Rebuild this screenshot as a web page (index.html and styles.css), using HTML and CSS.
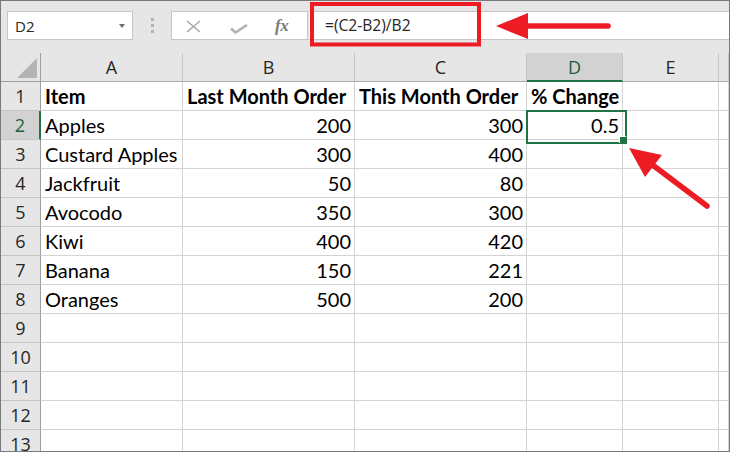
FILE: index.html
```html
<!DOCTYPE html>
<html>
<head>
<meta charset="utf-8">
<link rel="stylesheet" href="styles.css">
</head>
<body>
<div class="app">
  <div class="toolbar">
    <div class="namebox">
      <span class="name">D2</span>
      <span class="caret"></span>
    </div>
    <div class="grip"><i></i><i></i><i></i></div>
    <div class="fxbox">
      <svg class="ic ic-x" width="15" height="13" viewBox="0 0 15 13"><path d="M1 1 L14 12 M14 1 L1 12" stroke="#a9a9a9" stroke-width="1.6" fill="none"/></svg>
      <svg class="ic ic-check" width="18" height="10" viewBox="0 0 18 10"><path d="M1 4.5 L5.5 8.5 L17 1" stroke="#b3b3b3" stroke-width="2.6" fill="none"/></svg>
      <span class="fx">fx</span>
    </div>
    <div class="formula">=(C2-B2)/B2</div>
  </div>

  <div class="sheet">
    <div class="corner"><span class="tri"></span></div>
    <div class="ch">A</div>
    <div class="ch">B</div>
    <div class="ch">C</div>
    <div class="ch sel">D</div>
    <div class="ch">E</div>
    <div class="ch"></div>

    <div class="rh">1</div>
    <div class="c b">Item</div>
    <div class="c b">Last Month Order</div>
    <div class="c b">This Month Order</div>
    <div class="c b">% Change</div>
    <div class="c"></div>
    <div class="c"></div>

    <div class="rh sel">2</div>
    <div class="c">Apples</div>
    <div class="c n">200</div>
    <div class="c n">300</div>
    <div class="c n active">0.5</div>
    <div class="c"></div>
    <div class="c"></div>

    <div class="rh">3</div>
    <div class="c">Custard Apples</div>
    <div class="c n">300</div>
    <div class="c n">400</div>
    <div class="c"></div>
    <div class="c"></div>
    <div class="c"></div>

    <div class="rh">4</div>
    <div class="c">Jackfruit</div>
    <div class="c n">50</div>
    <div class="c n">80</div>
    <div class="c"></div>
    <div class="c"></div>
    <div class="c"></div>

    <div class="rh">5</div>
    <div class="c">Avocodo</div>
    <div class="c n">350</div>
    <div class="c n">300</div>
    <div class="c"></div>
    <div class="c"></div>
    <div class="c"></div>

    <div class="rh">6</div>
    <div class="c">Kiwi</div>
    <div class="c n">400</div>
    <div class="c n">420</div>
    <div class="c"></div>
    <div class="c"></div>
    <div class="c"></div>

    <div class="rh">7</div>
    <div class="c">Banana</div>
    <div class="c n">150</div>
    <div class="c n">221</div>
    <div class="c"></div>
    <div class="c"></div>
    <div class="c"></div>

    <div class="rh">8</div>
    <div class="c">Oranges</div>
    <div class="c n">500</div>
    <div class="c n">200</div>
    <div class="c"></div>
    <div class="c"></div>
    <div class="c"></div>

    <div class="rh">9</div>
    <div class="c"></div><div class="c"></div><div class="c"></div><div class="c"></div><div class="c"></div><div class="c"></div>
    <div class="rh">10</div>
    <div class="c"></div><div class="c"></div><div class="c"></div><div class="c"></div><div class="c"></div><div class="c"></div>
    <div class="rh">11</div>
    <div class="c"></div><div class="c"></div><div class="c"></div><div class="c"></div><div class="c"></div><div class="c"></div>
    <div class="rh">12</div>
    <div class="c"></div><div class="c"></div><div class="c"></div><div class="c"></div><div class="c"></div><div class="c"></div>
    <div class="rh">13</div>
    <div class="c"></div><div class="c"></div><div class="c"></div><div class="c"></div><div class="c"></div><div class="c"></div>
  </div>

  <svg class="annot" width="730" height="452" viewBox="0 0 730 452">
    <rect x="312" y="4" width="167" height="40.5" fill="none" stroke="#ed1c24" stroke-width="4"/>
    <polygon points="496,26 528,13 528,39" fill="#ed1c24"/>
    <line x1="524" y1="26" x2="608" y2="26" stroke="#ed1c24" stroke-width="5.5" stroke-linecap="round"/>
    <polygon points="629,148 662,155 645,177" fill="#ed1c24"/>
    <line x1="650" y1="163" x2="707" y2="206" stroke="#ed1c24" stroke-width="5.5" stroke-linecap="round"/>
  </svg>
</div>
</body>
</html>
```

FILE: styles.css
```css
* { box-sizing: border-box; }

html, body {
  margin: 0;
  padding: 0;
  background: #ffffff;
}

.app {
  position: relative;
  width: 730px;
  height: 452px;
  overflow: hidden;
  border: 1px solid #7a7a7a;
  background: #e6e6e6;
  font-family: "Open Sans", "Noto Sans", sans-serif;
}

/* ---------- formula bar ---------- */
.toolbar {
  height: 52px;
  display: flex;
  align-items: flex-start;
  padding: 10px 0 0 6px;
  background: #e6e6e6;
}

.namebox {
  width: 126px;
  height: 29px;
  background: #fff;
  border: 1px solid #c6c6c6;
  display: flex;
  align-items: center;
  justify-content: space-between;
  padding: 0 7px 0 7px;
}

.name {
  font-size: 15px;
  color: #262626;
  letter-spacing: 0.2px;
}

.caret {
  width: 0;
  height: 0;
  border-left: 3.5px solid transparent;
  border-right: 3.5px solid transparent;
  border-top: 4px solid #6d6d6d;
}

.grip {
  width: 38px;
  height: 29px;
  display: flex;
  flex-direction: column;
  align-items: center;
  justify-content: center;
  gap: 3px;
}
.grip i {
  display: block;
  width: 3px;
  height: 3px;
  background: #b3b3b3;
}

.fxbox {
  width: 137px;
  height: 29px;
  background: #fff;
  border: 1px solid #c6c6c6;
  display: flex;
  align-items: center;
  padding-left: 14px;
}
.ic-x { margin-right: 29px; margin-top: 1px; }
.ic-check { margin-right: 27px; margin-top: 7px; }
.fx {
  font-family: "Liberation Serif", "DejaVu Serif", serif;
  font-style: italic;
  font-weight: bold;
  font-size: 17px;
  color: #7a7a7a;
  letter-spacing: -0.5px;
}

.formula {
  flex: 1;
  height: 29px;
  background: #fff;
  border-top: 1px solid #c6c6c6;
  border-bottom: 1px solid #c6c6c6;
  margin-left: 1px;
  padding-left: 16px;
  font-size: 15.6px;
  line-height: 27px;
  color: #262626;
}

/* ---------- sheet ---------- */
.sheet {
  display: grid;
  grid-template-columns: 40px 142px 172px 172px 96px 96px 1fr;
  grid-auto-rows: 29px;
  background: #fff;
}

.corner {
  background: #e6e6e6;
  border-right: 1px solid #9f9f9f;
  border-bottom: 1px solid #9f9f9f;
  position: relative;
}
.tri {
  position: absolute;
  left: 16px;
  top: 5px;
  width: 0;
  height: 0;
  border-left: 20px solid transparent;
  border-bottom: 20px solid #b4b4b4;
}

.ch {
  background: #e6e6e6;
  border-right: 1px solid #c6c6c6;
  border-bottom: 1px solid #ababab;
  text-align: center;
  font-size: 18px;
  line-height: 28px;
  color: #262626;
}
.ch.sel {
  background: #d2d2d2;
  color: #1d5e3a;
  border-bottom: 2px solid #217346;
}

.rh {
  background: #e6e6e6;
  border-right: 1px solid #9f9f9f;
  border-bottom: 1px solid #c6c6c6;
  text-align: center;
  font-size: 18px;
  line-height: 28px;
  color: #262626;
}
.rh.sel {
  background: #d2d2d2;
  color: #1d5e3a;
  border-right: 2px solid #217346;
}

.c {
  border-right: 1px solid #d4d4d4;
  border-bottom: 1px solid #d4d4d4;
  font-family: "Lato", "Open Sans", sans-serif;
  font-size: 20px;
  line-height: 28px;
  padding: 0 3px 0 4px;
  color: #000;
  white-space: nowrap;
}
.c.b { font-weight: bold; }
.c.n { text-align: right; padding-right: 3px; }

.c.active { position: relative; }
.c.active::after {
  content: "";
  position: absolute;
  left: -1px;
  top: -1px;
  width: 97px;
  height: 30px;
  border: 2px solid #217346;
}
.c.active::before {
  content: "";
  position: absolute;
  right: -4px;
  bottom: -4px;
  width: 6px;
  height: 6px;
  background: #217346;
  border-left: 1px solid #fff;
  border-top: 1px solid #fff;
  z-index: 2;
}

/* ---------- annotations ---------- */
.annot {
  position: absolute;
  left: -1px;
  top: -1px;
  pointer-events: none;
}
```
